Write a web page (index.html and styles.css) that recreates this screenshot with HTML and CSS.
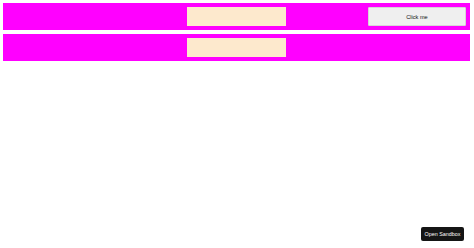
FILE: index.html
```html
<!DOCTYPE html>
<html lang="en">
<head>
<meta charset="utf-8">
<title>Rows</title>
<link rel="stylesheet" href="styles.css">
</head>
<body>
<div class="stack">
  <div class="row">
    <div class="cell"></div>
    <div class="field"></div>
    <div class="cell cell-end"><button class="btn" type="button">Click me</button></div>
  </div>
  <div class="row">
    <div class="cell"></div>
    <div class="field"></div>
    <div class="cell"></div>
  </div>
</div>
<a class="sandbox" href="#">Open Sandbox</a>
</body>
</html>
```
FILE: styles.css
```css
html, body {
  background: #ffffff;
}
body {
  margin: 3px 4px 0 3px;
  font-family: "Liberation Sans", Arial, sans-serif;
}
.stack {
  display: flex;
  flex-direction: column;
  gap: 4px;
}
.row {
  display: grid;
  grid-template-columns: 1fr 99px 1fr;
  align-items: center;
  padding: 4px;
  background: #ff00ff;
}
.field {
  height: 19px;
  background: #fde9cd;
}
.cell {
  height: 19px;
  display: flex;
}
.cell-end {
  justify-content: flex-end;
}
.btn {
  width: 98px;
  height: 19px;
  margin: 0;
  padding: 0;
  border: 1px solid #d6d6d6;
  border-radius: 1px;
  background: #efefef;
  color: #111;
  font-family: "Liberation Sans", Arial, sans-serif;
  font-size: 5.6px;
}
.sandbox {
  position: fixed;
  right: 10px;
  bottom: 7px;
  width: 43px;
  height: 14px;
  display: flex;
  align-items: center;
  justify-content: center;
  background: #151515;
  border-radius: 2px;
  color: #ffffff;
  font-size: 5.4px;
  text-decoration: none;
}
```
